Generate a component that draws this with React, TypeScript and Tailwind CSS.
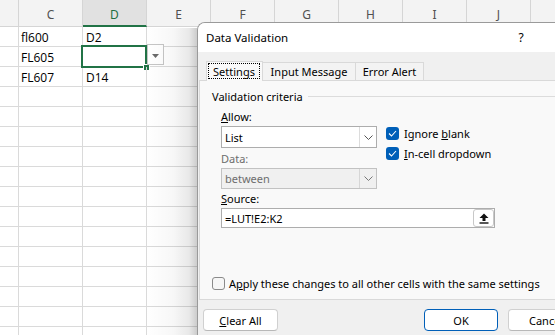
import React from "react";

const UI = "font-['Noto_Sans','Open_Sans',sans-serif]";

const letters = ["C", "D", "E", "F", "G", "H", "I", "J", ""];
const rowData: [string, string][] = [
  ["fl600", "D2"],
  ["FL605", ""],
  ["FL607", "D14"],
  ...Array.from({ length: 14 }, () => ["", ""] as [string, string]),
];

function Sheet() {
  return (
    <div className="font-['Open_Sans',sans-serif] text-[12px] leading-[15px]">
      <div className="flex h-[27px]">
        <div className="w-[19px] shrink-0 border-r border-b border-[#d5d5d5] bg-[#f3f3f3]" />
        {letters.map((l, idx) =>
          l === "D" ? (
            <div
              key={idx}
              className={`w-[64px] shrink-0 flex items-end justify-center pb-[3px] border-r border-[#d5d5d5] border-b-2 border-b-[#217346] bg-[#e1e1e1] text-[#1e6e42] ${UI}`}
            >
              {l}
            </div>
          ) : (
            <div
              key={idx}
              className={`w-[64px] shrink-0 flex items-end justify-center pb-[4px] border-r border-b border-[#d5d5d5] bg-[#f3f3f3] text-[#505050] ${UI}`}
            >
              {l}
            </div>
          )
        )}
      </div>
      {rowData.map(([c, d], i) => (
        <div key={i} className="flex h-[20px]">
          <div className="w-[19px] shrink-0 border-r border-b border-[#dadada]" />
          <div className="w-[64px] shrink-0 border-r border-b border-[#dadada] flex items-center pl-[2px] pt-[1px] text-black">
            {c}
          </div>
          <div className="relative w-[64px] shrink-0 border-r border-b border-[#dadada] flex items-center pl-[3px] pt-[1px] text-black">
            {d}
            {i === 1 && (
              <>
                <div className="absolute left-[-2px] top-[-2px] w-[66px] h-[23px] border-2 border-[#217346]" />
                <div className="absolute left-[60px] top-[17px] w-[7px] h-[7px] bg-white flex items-center justify-center">
                  <div className="w-[5px] h-[5px] bg-[#217346]" />
                </div>
                <div className="absolute left-[64px] top-[-3px] w-[17px] h-[21px] bg-white border border-[#c6c6c6] flex items-center justify-center pt-[3px]">
                  <svg width="7" height="4" viewBox="0 0 7 4">
                    <polygon points="0,0 7,0 3.5,4" fill="#6a6a6a" />
                  </svg>
                </div>
              </>
            )}
          </div>
          {letters.slice(2).map((_, idx) => (
            <div key={idx} className="w-[64px] shrink-0 border-r border-b border-[#dadada]" />
          ))}
        </div>
      ))}
    </div>
  );
}

function Chevron({ color = "#555" }: { color?: string }) {
  return (
    <svg width="9" height="5" viewBox="0 0 9 5">
      <polyline points="0.5,0.5 4.5,4.5 8.5,0.5" fill="none" stroke={color} strokeWidth="1" />
    </svg>
  );
}

function CheckBox({ checked }: { checked: boolean }) {
  return checked ? (
    <div className="w-[13px] h-[13px] shrink-0 rounded-[3px] bg-[#005fb8] flex items-center justify-center">
      <svg width="9" height="7" viewBox="0 0 9 7">
        <polyline points="1,3.5 3.5,6 8,1" fill="none" stroke="white" strokeWidth="1.1" />
      </svg>
    </div>
  ) : (
    <div className="w-[13px] h-[13px] shrink-0 rounded-[3px] border border-[#8a8a8a] bg-[#f6f6f6]" />
  );
}

function Dialog() {
  return (
    <div className={`absolute left-[197px] top-[22px] w-[400px] h-[330px] ${UI} text-[11px] leading-[15px] text-black`}>
      <div className="absolute right-full top-[6px] bottom-0 w-[52px] bg-[linear-gradient(to_right,rgba(0,0,0,0),rgba(0,0,0,0.03)_55%,rgba(0,0,0,0.09)_85%,rgba(0,0,0,0.2))]" />
      <div className="relative h-full flex flex-col rounded-tl-[8px] border-l border-t border-[#9a9a9a] bg-[#f0f0f0] overflow-hidden">
        <div className="h-[29px] shrink-0 bg-white flex items-center pl-[8px] pb-[1px] text-[11.5px]">
          <span className="flex-1">Data Validation</span>
          <span className="w-[20px] text-center text-[12px]">?</span>
          <span className="w-[66px]" />
        </div>
        <div className="flex-1 flex flex-col">
          <div className="h-[28px] shrink-0 flex items-end pl-[8px]">
            <div className="relative z-10 -mb-px h-[20px] w-[57px] border-x border-t border-[#d9d9d9] bg-[#f9f9f9] flex items-start pt-[1px] pl-[1px]">
              <div className="h-[16px] w-[52px] border border-dotted border-black flex items-center justify-center">
                Settings
              </div>
            </div>
            <div className="h-[18px] w-[93px] border-r border-t border-[#d9d9d9] bg-[#f3f3f3] flex items-center justify-center">
              Input Message
            </div>
            <div className="h-[18px] w-[68px] border-r border-t border-[#d9d9d9] bg-[#f3f3f3] flex items-center justify-center">
              Error Alert
            </div>
          </div>
          <div className="ml-[1px] h-[220px] shrink-0 border border-[#d9d9d9] bg-[#f9f9f9] flex flex-col">
            <div className="flex items-center gap-[5px] pt-[8px] pl-[12px] pr-[10px]">
              <span>Validation criteria</span>
              <div className="flex-1 h-px bg-[#dcdcdc]" />
            </div>
            <div className="flex pl-[21px] mt-[5px]">
              <div className="w-[156px] flex flex-col">
                <span>
                  <span className="underline">A</span>llow:
                </span>
                <div className="mt-[2px] h-[22px] border border-[#adadad] bg-white flex items-center">
                  <span className="flex-1 pl-[3px]">List</span>
                  <div className="w-[17px] h-full border-l border-[#dcdcdc] flex items-center justify-center">
                    <Chevron />
                  </div>
                </div>
                <span className="mt-[3px] text-[#6d6d6d]">Data:</span>
                <div className="mt-[2px] h-[21px] border border-[#c2c2c2] bg-[#f0f0f0] flex items-center text-[#6d6d6d]">
                  <span className="flex-1 pl-[3px]">between</span>
                  <div className="w-[17px] h-full border-l border-[#d6d6d6] flex items-center justify-center">
                    <Chevron color="#777" />
                  </div>
                </div>
              </div>
              <div className="ml-[9px] pt-[14px] flex flex-col">
                <div className="h-[20px] flex items-center gap-[5px]">
                  <CheckBox checked />
                  <span>
                    Ignore <span className="underline">b</span>lank
                  </span>
                </div>
                <div className="h-[20px] flex items-center gap-[5px]">
                  <CheckBox checked />
                  <span>
                    <span className="underline">I</span>n-cell dropdown
                  </span>
                </div>
              </div>
            </div>
            <div className="pl-[21px] mt-[2px] flex flex-col">
              <span>
                <span className="underline">S</span>ource:
              </span>
              <div className="mt-[2px] w-[274px] h-[20px] border border-[#adadad] bg-white flex items-center">
                <span className="flex-1 pl-[3px]">=LUT!E2:K2</span>
                <div className="w-[21px] h-[18px] rounded-[3px] border border-[#c8c8c8] bg-white flex items-center justify-center">
                  <svg width="10" height="11" viewBox="0 0 10 11">
                    <polygon points="5,0.5 9.5,5 6.5,5 6.5,8 3.5,8 3.5,5 0.5,5" fill="#111" />
                    <rect x="0.5" y="9.3" width="9" height="1.4" fill="#111" />
                  </svg>
                </div>
              </div>
            </div>
            <div className="mt-auto mb-[8px] pl-[12px] flex items-center gap-[4px]">
              <CheckBox checked={false} />
              <span>
                A<span className="underline">p</span>ply these changes to all other cells with the same settings
              </span>
            </div>
          </div>
          <div className="mt-[9px] flex">
            <div className="ml-[5px] w-[75px] h-[22px] rounded-[4px] border border-[#d0d0d0] border-b-[#b8b8b8] bg-white flex items-center justify-center">
              <span>
                <span className="underline">C</span>lear All
              </span>
            </div>
            <div className="ml-[146px] w-[74px] h-[22px] rounded-[4px] border border-[#005fb8] bg-white flex items-center justify-center">
              OK
            </div>
            <div className="ml-[10px] w-[74px] h-[22px] rounded-[4px] border border-[#d0d0d0] border-b-[#b8b8b8] bg-white flex items-center justify-start pl-[20px]">
              Cancel
            </div>
          </div>
        </div>
      </div>
    </div>
  );
}

export default function App() {
  return (
    <div className="relative w-[555px] h-[335px] overflow-hidden bg-white">
      <Sheet />
      <Dialog />
    </div>
  );
}
